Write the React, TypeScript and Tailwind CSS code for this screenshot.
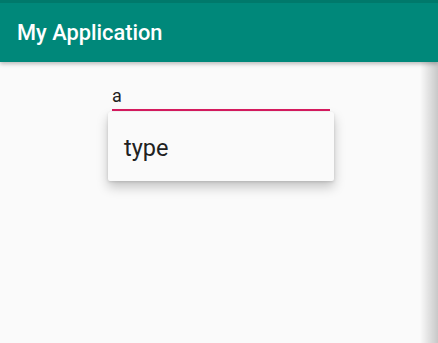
export default function App() {
  return (
    <div
      className="relative h-[343px] w-[438px] overflow-hidden bg-[#fafafa]"
      style={{ fontFamily: 'Roboto, "Noto Sans", sans-serif' }}
    >
      <header className="relative z-10 h-[62px] border-t-[3px] border-[#00796b] bg-[#00887a] shadow-[0_2px_4px_rgba(0,0,0,0.25)]">
        <h1 className="pl-[17px] pt-[16px] text-[21.8px] font-medium leading-[27px] text-white">My Application</h1>
      </header>

      <div className="relative ml-[112px] mt-[24px] w-[218px]">
        <div className="h-[25px] border-b-2 border-[#d81b60] text-[18px] leading-[20px] text-[#212121]">a</div>
        <div className="absolute left-[-4px] top-[26px] z-10 h-[69px] w-[226px] rounded-[2px] bg-[#fafafa] shadow-[0_6px_12px_rgba(0,0,0,0.22),0_1px_3px_rgba(0,0,0,0.12)]">
          <div className="pl-4 pt-[22px] text-[23.5px] leading-[28px] text-[#212121]">type</div>
        </div>
      </div>

      <div className="pointer-events-none absolute right-0 top-0 h-full w-[18px] bg-gradient-to-r from-transparent to-[rgba(0,0,0,0.2)]" />
    </div>
  );
}
